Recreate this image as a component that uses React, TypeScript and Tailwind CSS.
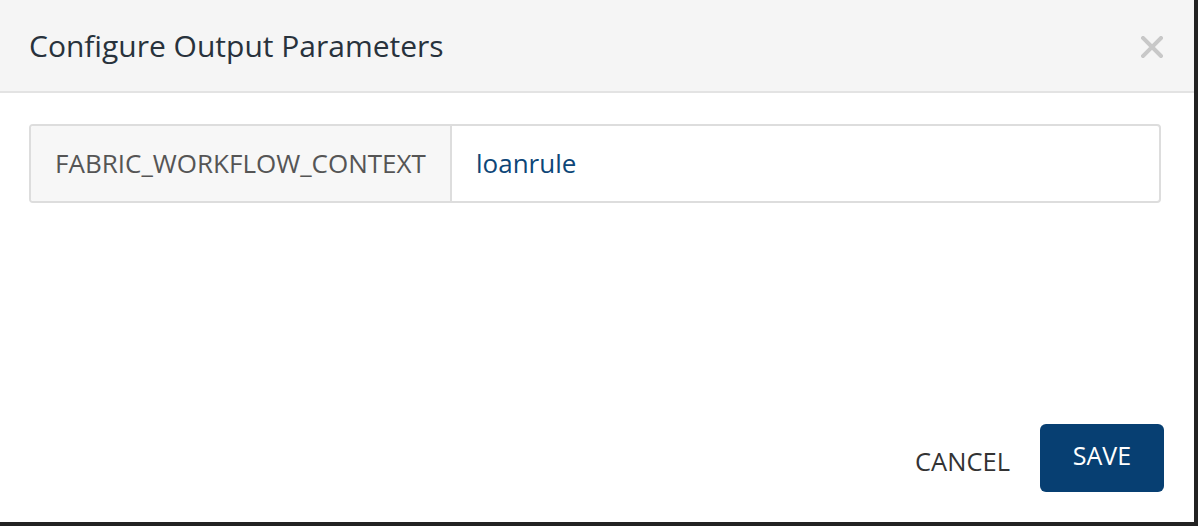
const CloseIcon = () => (
  <svg width="22" height="22" viewBox="0 0 22 22" className="block">
    <path d="M2 2 L20 20 M20 2 L2 20" stroke="#c8c8c8" strokeWidth="4" strokeLinecap="square" />
  </svg>
);

const App = () => {
  return (
    <div className="w-[1198px] h-[526px] bg-[#222222] font-['Open_Sans',sans-serif] overflow-hidden">
      <div className="w-[1194px] h-[522px] bg-white flex flex-col">
        {/* Header */}
        <div className="h-[93px] shrink-0 bg-[#f5f5f5] border-b-2 border-[#e3e3e3] pl-[29px] pr-[31px] flex items-center justify-between">
          <h1 className="text-[30px] text-[#28323c] leading-none">Configure Output Parameters</h1>
          <button className="mt-[3px]">
            <CloseIcon />
          </button>
        </div>

        {/* Body */}
        <div className="pl-[29px] pr-[33px] pt-[31px]">
          <div className="h-[79px] flex border-2 border-[#dddddd] rounded-[4px] overflow-hidden">
            <div className="w-[421px] shrink-0 bg-[#f7f7f7] border-r-2 border-[#dddddd] flex items-center justify-center text-[26px] text-[#555555]">
              FABRIC_WORKFLOW_CONTEXT
            </div>
            <div className="flex-1 flex items-center pl-[24px] text-[26px] text-[#0d4678]">
              loanrule
            </div>
          </div>
        </div>

        {/* Footer */}
        <div className="flex-1 flex items-end justify-end gap-[30px] pr-[30px] pb-[30px]">
          <button className="text-[25.5px] text-[#333333] mb-[12px]">CANCEL</button>
          <button className="w-[124px] h-[68px] rounded-[6px] bg-[#073f72] text-white text-[25px] pb-[4px]">
            SAVE
          </button>
        </div>
      </div>
    </div>
  );
};

export default App;
